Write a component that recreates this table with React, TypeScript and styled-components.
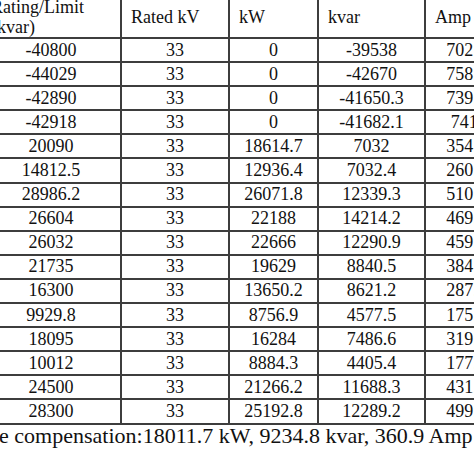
import React from 'react';
import styled, { createGlobalStyle } from 'styled-components';

const GlobalStyle = createGlobalStyle`
  html,
  body {
    margin: 0;
    padding: 0;
    background: #fff;
    overflow: hidden;
  }

  body {
    font-family: 'Liberation Serif', 'Times New Roman', serif;
    color: #111;
  }
`;

const LINE = '#3d3d3d';

const Page = styled.div`
  width: 474px;
  height: 474px;
  overflow: hidden;
  background: #fff;
`;

// the table is cropped: it starts left of and above the visible area
const Sheet = styled.div`
  margin: -5px 0 0 -20px;
  width: max-content;
`;

const Grid = styled.div`
  display: grid;
  grid-template-columns: 140px 108px 89px 107px 92px;
  grid-template-rows: 42px repeat(16, 24.1px);
  border-left: 2px solid ${LINE};
  border-top: 2px solid ${LINE};
`;

const Cell = styled.div<{ $head?: boolean }>`
  box-sizing: border-box;
  display: flex;
  align-items: center;
  justify-content: ${(p) => (p.$head ? 'flex-start' : 'center')};
  padding: ${(p) => (p.$head ? '0 0 0 9px' : '0')};
  border-right: 2px solid ${LINE};
  border-bottom: 2px solid ${LINE};
  font-size: 18px;
  line-height: ${(p) => (p.$head ? '20px' : 'normal')};
  white-space: nowrap;
`;

const Caption = styled.p`
  margin: -2px 0 0 -51px;
  font-size: 22px;
  line-height: 1.15;
  white-space: nowrap;
`;

const rows: string[][] = [
  ['-40800', '33', '0', '-39538', '702.42'],
  ['-44029', '33', '0', '-42670', '758.31'],
  ['-42890', '33', '0', '-41650.3', '739.86'],
  ['-42918', '33', '0', '-41682.1', '741.3'],
  ['20090', '33', '18614.7', '7032', '354.27'],
  ['14812.5', '33', '12936.4', '7032.4', '260.53'],
  ['28986.2', '33', '26071.8', '12339.3', '510.14'],
  ['26604', '33', '22188', '14214.2', '469.62'],
  ['26032', '33', '22666', '12290.9', '459.08'],
  ['21735', '33', '19629', '8840.5', '384.45'],
  ['16300', '33', '13650.2', '8621.2', '287.91'],
  ['9929.8', '33', '8756.9', '4577.5', '175.36'],
  ['18095', '33', '16284', '7486.6', '319.72'],
  ['10012', '33', '8884.3', '4405.4', '177.58'],
  ['24500', '33', '21266.2', '11688.3', '431.19'],
  ['28300', '33', '25192.8', '12289.2', '499.65'],
];

const App: React.FunctionComponent = () => {
  return (
    <Page>
      <GlobalStyle />
      <Sheet>
        <Grid>
          <Cell $head>
            <span>
              Rating/Limit
              <br />
              (kvar)
            </span>
          </Cell>
          <Cell $head>Rated kV</Cell>
          <Cell $head>kW</Cell>
          <Cell $head>kvar</Cell>
          <Cell $head>Amp</Cell>
          {rows.map((row, i) =>
            row.map((value, j) => <Cell key={`${i}-${j}`}>{value}</Cell>)
          )}
        </Grid>
      </Sheet>
      <Caption>Before compensation:18011.7 kW, 9234.8 kvar, 360.9 Amp</Caption>
    </Page>
  );
};

export default App;
